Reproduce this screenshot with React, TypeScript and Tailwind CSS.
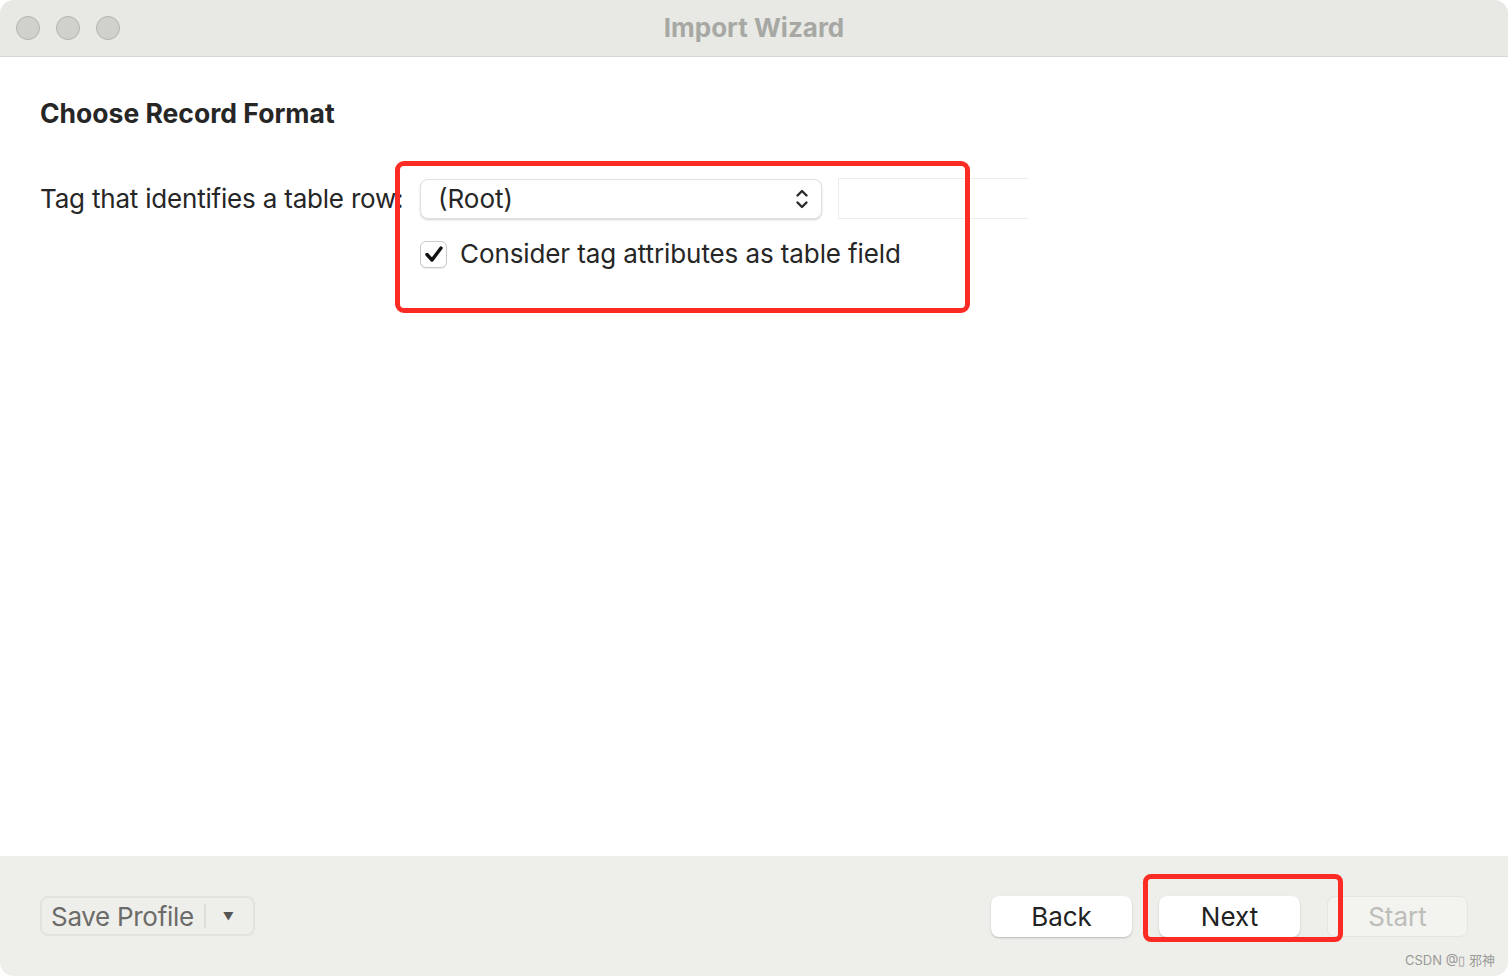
import { useState } from 'react'

const font = { fontFamily: 'Inter, "Noto Sans", "Noto Sans CJK SC", sans-serif' }

function TrafficLight() {
  return <span className="h-[24px] w-[24px] rounded-full border border-[#b4b4af] bg-[#d1d1cc]" />
}

function Chevrons() {
  return (
    <svg width="14" height="22" viewBox="0 0 14 22" fill="none" stroke="#2b2b2b" strokeWidth="2.4" strokeLinecap="round" strokeLinejoin="round">
      <path d="M2.5 7.5 L7 3 L11.5 7.5" />
      <path d="M2.5 14.5 L7 19 L11.5 14.5" />
    </svg>
  )
}

export default function App() {
  const [checked, setChecked] = useState(true)

  return (
    <div className="relative h-[976px] w-[1508px] overflow-hidden bg-white" style={font}>
      <div className="flex h-full flex-col overflow-hidden rounded-[14px] bg-white">
        {/* title bar */}
        <div className="relative flex h-[57px] shrink-0 items-center border-b border-[#d6d6d2] bg-[#e8e9e5]">
          <div className="flex items-center gap-[16px] pl-[16px]">
            <TrafficLight />
            <TrafficLight />
            <TrafficLight />
          </div>
          <div className="absolute inset-x-0 top-0 flex h-[54px] items-center justify-center text-[26px] font-bold text-[#a7a8a4]">
            Import Wizard
          </div>
        </div>

        {/* body */}
        <div className="flex-1 px-[40px] pt-[38px]">
          <h1 className="text-[26.5px] font-bold leading-[36px] text-[#262626]">Choose Record Format</h1>
          <div className="mt-[47px] flex items-start">
            <div className="w-[380px] pt-[4px] text-[26px] leading-[34px] tracking-[-0.2px] text-[#262626]">Tag that identifies a table row:</div>
            <div className="flex flex-col">
              <div className="flex items-center gap-[16px]">
                <button className="flex h-[40px] w-[402px] items-center justify-between rounded-[8px] border border-[#e2e2e2] bg-white pl-[17px] pr-[12px] text-[26px] text-[#262626] shadow-[0_1px_2px_rgba(0,0,0,0.18)]">
                  <span>(Root)</span>
                  <Chevrons />
                </button>
                <div className="h-[41px] w-[190px] border-t border-b border-l border-[#ededed] bg-white" />
              </div>
              <label className="mt-[19px] flex cursor-pointer items-center gap-[13px] text-[26px] leading-[32px] tracking-[-0.1px] text-[#262626]">
                <span
                  onClick={() => setChecked(!checked)}
                  className="flex h-[27px] w-[27px] items-center justify-center rounded-[6px] border border-[#c9c9c9] bg-white shadow-[0_1px_1px_rgba(0,0,0,0.08)]"
                >
                  {checked && (
                    <svg width="20" height="18" viewBox="0 0 20 18" fill="none" stroke="#111" strokeWidth="3.4" strokeLinecap="round" strokeLinejoin="round">
                      <path d="M3 9.5 L8 15 L17 3" />
                    </svg>
                  )}
                </span>
                Consider tag attributes as table field
              </label>
            </div>
          </div>
        </div>

        {/* footer */}
        <div className="flex h-[120px] shrink-0 items-center justify-between bg-[#eeeeea] pl-[40px] pr-[40px]">
          <div className="flex h-[40px] items-center rounded-[8px] border-2 border-[#e2e2de] pl-[9px] pr-[19px] text-[26px] tracking-[-0.3px] text-[#6b6b69]">
            <span>Save Profile</span>
            <span className="ml-[10px] mr-[17px] h-[24px] w-[2px] bg-[#deded9]" />
            <span className="text-[11px] text-[#555]">▼</span>
          </div>
          <div className="flex items-center gap-[27px]">
            <button className="h-[41px] w-[141px] rounded-[8px] bg-white text-[26px] text-[#222] shadow-[0_1px_2px_rgba(0,0,0,0.22)]">Back</button>
            <button className="h-[41px] w-[141px] rounded-[8px] bg-white text-[26px] text-[#222] shadow-[0_1px_2px_rgba(0,0,0,0.22)]">Next</button>
            <button disabled className="h-[41px] w-[141px] rounded-[8px] border border-[#e4e4e0] bg-[#f3f3f0] text-[26px] text-[#bdbdba]">Start</button>
          </div>
        </div>
      </div>

      {/* annotations */}
      <div className="pointer-events-none absolute left-[395px] top-[161px] h-[152px] w-[575px] rounded-[9px] border-[5px] border-[#fc2b23]" />
      <div className="pointer-events-none absolute left-[1143px] top-[874px] h-[68px] w-[200px] rounded-[8px] border-[5px] border-[#fc2b23]" />
      <div className="absolute left-[1405px] top-[951px] text-[13px] text-[#9a9a98]">CSDN @▯ 邪神</div>
    </div>
  )
}
